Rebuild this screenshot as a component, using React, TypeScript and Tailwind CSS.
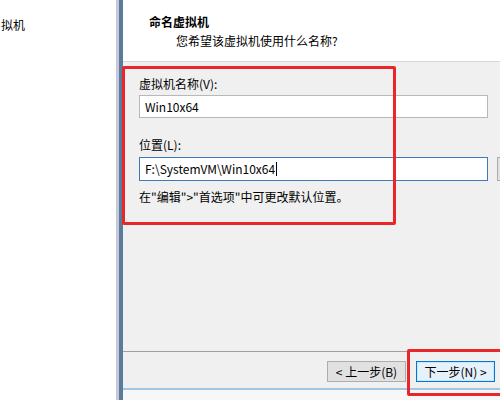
export default function App() {
  const font = { fontFamily: '"Noto Sans CJK SC", "Noto Sans", sans-serif' };
  return (
    <div
      className="relative flex h-[400px] w-[500px] overflow-hidden bg-white text-[12px] text-black"
      style={font}
    >
      {/* left pane */}
      <div className="w-[116px] shrink-0 bg-white pt-[17px] pl-[1px] leading-[16px]">
        拟机
      </div>
      <div className="w-[3px] shrink-0 bg-[#c6c8d6]" />
      <div className="w-[4px] shrink-0 bg-[#5b7b9c]" />

      {/* dialog */}
      <div className="flex h-[400px] w-[377px] shrink-0 flex-col">
        <div className="h-[62px] shrink-0 border-b border-[#d8d8d8] bg-white pl-[26px] pt-[13px] leading-[18px]">
          <div className="font-bold">命名虚拟机</div>
          <div className="pl-[27px] pt-[1px]">您希望该虚拟机使用什么名称?</div>
        </div>

        <div className="flex h-[290px] shrink-0 flex-col border-b border-[#a0a0a0] bg-[#f0f0f0] pl-[16px] pt-[14px]">
          <div className="leading-[16px]">虚拟机名称(V):</div>
          <div className="mt-[3px] flex h-[23px] w-[349px] items-center border border-[#b8b8b8] bg-white pl-[5px]">
            Win10x64
          </div>

          <div className="mt-[19px] leading-[16px]">位置(L):</div>
          <div className="mt-[4px] flex items-center">
            <div className="flex h-[24px] w-[349px] shrink-0 items-center border border-[#3d7ab8] bg-white pl-[5px]">
              F:\SystemVM\Win10x64
              <span className="ml-[1px] inline-block h-[14px] w-px bg-black" />
            </div>
            <div className="ml-[9px] h-[24px] w-[20px] shrink-0 border border-[#adadad] bg-[#e1e1e1]" />
          </div>

          <div className="mt-[8px] leading-[16px]">在"编辑"&gt;"首选项"中可更改默认位置。</div>
        </div>

        <div className="flex h-[38px] shrink-0 items-start justify-end gap-[10px] border-b-2 border-[#9fc6e8] bg-[#f0f0f0] pr-[5px] pt-[9px]">
          <button className="h-[21px] w-[79px] border border-[#adadad] bg-[#e1e1e1] text-[12px] leading-[18px]">
            &lt; 上一步(B)
          </button>
          <button className="h-[21px] w-[79px] border border-[#0078d7] bg-[#e5f1fb] text-[12px] leading-[18px] shadow-[inset_0_0_0_1px_#cde6f7]">
            下一步(N) &gt;
          </button>
        </div>
        <div className="flex-1 bg-[#f7f7f7]" />
      </div>

      {/* annotations */}
      <div className="pointer-events-none absolute left-[122px] top-[66px] h-[159px] w-[274px] rounded-[2px] border-[3px] border-[#e8262b]" />
      <div className="pointer-events-none absolute left-[407px] top-[349px] h-[47px] w-[100px] rounded-[2px] border-[3px] border-[#e8262b]" />
    </div>
  );
}
